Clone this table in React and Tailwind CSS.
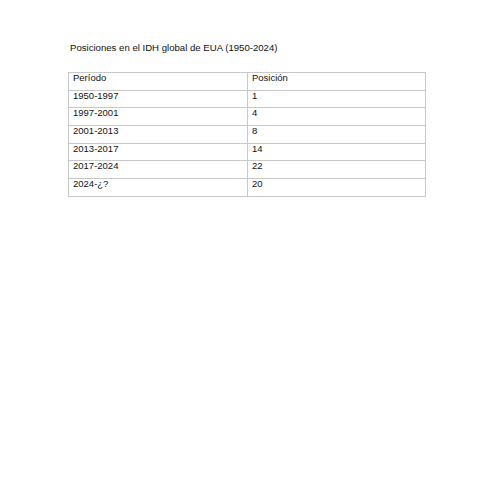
export default function App() {
  const rows = [
    ['Período', 'Posición'],
    ['1950-1997', '1'],
    ['1997-2001', '4'],
    ['2001-2013', '8'],
    ['2013-2017', '14'],
    ['2017-2024', '22'],
    ['2024-¿?', '20'],
  ];

  return (
    <div className="w-[495px] h-[495px] bg-white text-[#111]" style={{ fontFamily: '"Liberation Sans", Arial, sans-serif' }}>
      <div className="pt-[42px] pl-[70px] text-[9.6px] leading-[12px]">
        Posiciones en el IDH global de EUA (1950-2024)
      </div>
      <table className="ml-[68px] mt-[18px] w-[358px] border-collapse text-[9.5px]">
        <tbody>
          {rows.map((r, i) => (
            <tr key={i} className="h-[17.7px]">
              <td className="w-[179px] border border-[#c8c8c8] px-[4px] align-top pt-0 leading-[10px]">{r[0]}</td>
              <td className="border border-[#c8c8c8] px-[4px] align-top pt-0 leading-[10px]">{r[1]}</td>
            </tr>
          ))}
        </tbody>
      </table>
    </div>
  );
}
